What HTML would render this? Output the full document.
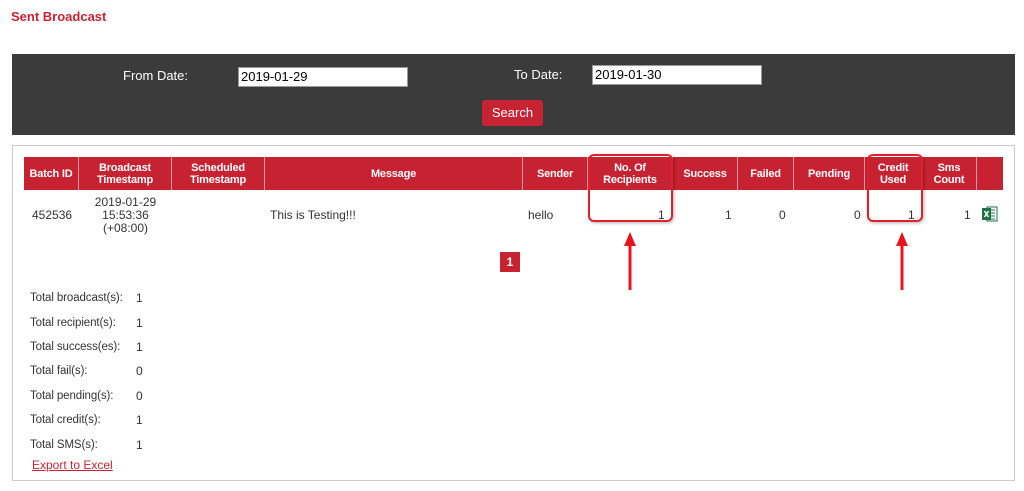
<!DOCTYPE html>
<html><head><meta charset="utf-8"><style>
*{margin:0;padding:0;box-sizing:border-box}
body{width:1024px;height:491px;background:#fff;position:relative;font-family:"Liberation Sans",sans-serif;font-size:12px;color:#333;overflow:hidden}
.a{position:absolute}
.title{left:11px;top:9px;color:#c82333;font-size:13px;font-weight:bold}
.panel{left:12px;top:54px;width:1003px;height:81px;background:#3b3b3b}
.lbl{color:#fff;font-size:13px}
.inp{background:#fff;border:1px solid #999;height:20px;font-size:13px;color:#000;padding:1px 2px;line-height:16px}
.btn{background:#c82333;color:#fff;border-radius:3px;font-size:13px;text-align:center;line-height:25px}
.box{left:12px;top:145px;width:1003px;height:336px;border:1px solid #ccc}
.th{top:157px;height:33px;background:#c62232;color:#fff;font-weight:bold;font-size:11px;display:flex;align-items:center;justify-content:center;text-align:center;line-height:12px;border-right:1px solid #e89aa0;letter-spacing:-0.2px}
.td{top:196px;font-size:12px;color:#333}
.hl{border:2px solid #e0202a;border-radius:6px;box-shadow:1px 1px 3px rgba(0,0,0,0.3)}
.row{position:absolute;left:30px;height:16px;line-height:16px;font-size:11.5px;color:#333;letter-spacing:-0.1px}
.row span{position:absolute;left:106px;top:0;font-size:12px;letter-spacing:0;white-space:nowrap}
.row{white-space:nowrap}
</style></head><body>
<div class="a title">Sent Broadcast</div>
<div class="a panel"></div>
<div class="a lbl" style="left:123px;top:68px">From Date:</div>
<div class="a inp" style="left:238px;top:67px;width:170px">2019-01-29</div>
<div class="a lbl" style="left:514px;top:67px">To Date:</div>
<div class="a inp" style="left:592px;top:65px;width:170px">2019-01-30</div>
<div class="a btn" style="left:482px;top:100px;width:61px;height:26px">Search</div>
<div class="a box"></div>
<div class="a th" style="left:24px;width:55px">Batch ID</div>
<div class="a th" style="left:79px;width:93px">Broadcast<br>Timestamp</div>
<div class="a th" style="left:172px;width:93px">Scheduled<br>Timestamp</div>
<div class="a th" style="left:265px;width:258px">Message</div>
<div class="a th" style="left:523px;width:65px">Sender</div>
<div class="a th" style="left:588px;width:85px">No. Of<br>Recipients</div>
<div class="a th" style="left:673px;width:65px">Success</div>
<div class="a th" style="left:738px;width:56px">Failed</div>
<div class="a th" style="left:794px;width:71px">Pending</div>
<div class="a th" style="left:865px;width:57px">Credit<br>Used</div>
<div class="a th" style="left:922px;width:55px">Sms<br>Count</div>
<div class="a th" style="left:977px;width:26px;border-right:0"></div>
<div class="a td" style="left:32px;top:208px">452536</div>
<div class="a td" style="left:79px;width:93px;text-align:center;line-height:13px">2019-01-29<br>15:53:36<br>(+08:00)</div>
<div class="a td" style="left:270px;top:208px">This is Testing!!!</div>
<div class="a td" style="left:528px;top:208px">hello</div>
<div class="a td" style="left:658px;top:208px">1</div>
<div class="a td" style="left:725px;top:208px">1</div>
<div class="a td" style="left:779px;top:208px">0</div>
<div class="a td" style="left:854px;top:208px">0</div>
<div class="a td" style="left:908px;top:208px">1</div>
<div class="a td" style="left:964px;top:208px">1</div>
<svg class="a" style="left:982px;top:206px" width="16" height="16" viewBox="0 0 16 16"><rect x="5" y="1" width="10" height="14" fill="#fff" stroke="#1e7145"/><path d="M8 4h5M8 7h5M8 10h5M8 13h5" stroke="#1e7145"/><rect x="0" y="2" width="9" height="12" fill="#1e7145"/><path d="M2.5 5l4 6M6.5 5l-4 6" stroke="#fff" stroke-width="1.5"/></svg>
<div class="a hl" style="left:588px;top:154px;width:85px;height:68px"></div>
<div class="a hl" style="left:867px;top:154px;width:56px;height:68px"></div>
<svg class="a" style="left:620px;top:228px" width="20" height="64"><path d="M10 4L4 18H16Z" fill="#e8141c"/><path d="M10 16V62" stroke="#e8141c" stroke-width="3"/></svg>
<svg class="a" style="left:892px;top:228px" width="20" height="64"><path d="M10 4L4 18H16Z" fill="#e8141c"/><path d="M10 16V62" stroke="#e8141c" stroke-width="3"/></svg>
<div class="a" style="left:500px;top:252px;width:20px;height:20px;background:#c62232;color:#fff;font-weight:bold;text-align:center;line-height:20px;font-size:12px">1</div>
<div class="row" style="top:290px">Total broadcast(s):<span>1</span></div>
<div class="row" style="top:315px">Total recipient(s):<span>1</span></div>
<div class="row" style="top:339px">Total success(es):<span>1</span></div>
<div class="row" style="top:363px">Total fail(s):<span>0</span></div>
<div class="row" style="top:388px">Total pending(s):<span>0</span></div>
<div class="row" style="top:412px">Total credit(s):<span>1</span></div>
<div class="row" style="top:437px">Total SMS(s):<span>1</span></div>
<div class="a" style="left:32px;top:458px;color:#c82333;text-decoration:underline;font-size:12px">Export to Excel</div>
</body></html>
